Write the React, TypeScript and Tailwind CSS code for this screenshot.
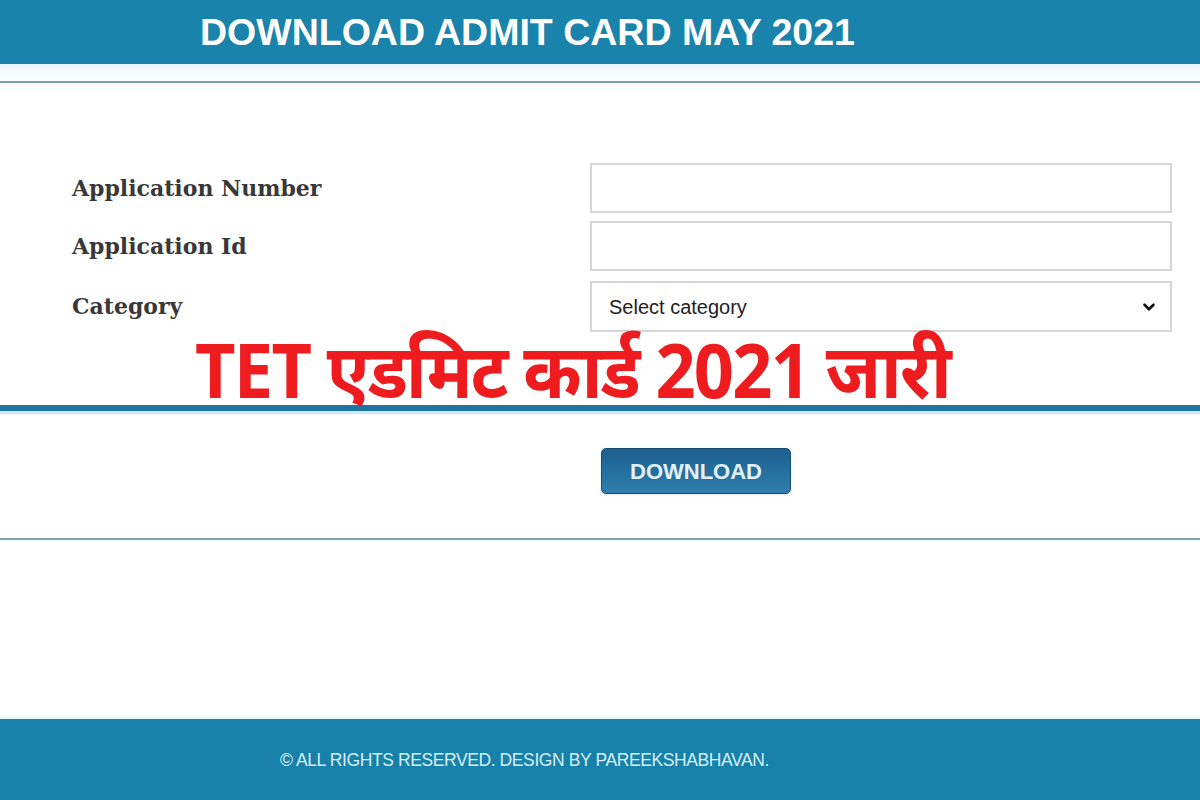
import { ChevronDown } from "lucide-react";

const labels = ["Application Number", "Application Id", "Category"];

export default function App() {
  return (
    <div className="w-[1200px] h-[800px] bg-white flex flex-col overflow-hidden">
      {/* header */}
      <div className="h-[64px] bg-[#1a83ac] flex items-center pl-[200px] shrink-0">
        <h1 className="text-white font-bold text-[37.5px] leading-none font-['Liberation_Sans',Arial,sans-serif] pt-[2px]">
          DOWNLOAD ADMIT CARD MAY 2021
        </h1>
      </div>
      <div className="h-[17px] bg-gradient-to-b from-[#eaf7fb] to-white shrink-0" />
      <div className="h-[2px] bg-[#7f9fa8] shrink-0" />

      {/* form */}
      <div className="pt-[80px] flex shrink-0">
        <div className="w-[590px] pl-[72px] flex flex-col font-['DejaVu_Serif',Georgia,serif] font-bold text-[22px] text-[#383838]">
          <div className="h-[50px] flex items-center pt-[1px]">{labels[0]}</div>
          <div className="h-[50px] mt-[8px] flex items-center">{labels[1]}</div>
          <div className="h-[51px] mt-[10px] flex items-center">{labels[2]}</div>
        </div>
        <div className="w-[582px] flex flex-col">
          <div className="h-[50px] border-2 border-[#d6d6d6] bg-white" />
          <div className="h-[50px] mt-[8px] border-2 border-[#d6d6d6] bg-white" />
          <div className="h-[51px] mt-[10px] border-2 border-[#d6d6d6] bg-white flex items-center justify-between pl-[17px] pr-[12px] font-['Liberation_Sans',Arial,sans-serif] text-[20px] text-[#222]">
            <span>Select category</span>
            <ChevronDown size={18} strokeWidth={3.5} className="text-[#111]" />
          </div>
        </div>
      </div>

      {/* red headline */}
      <div className="h-[73px] flex items-center pl-[195px] shrink-0">
        <p className="origin-left scale-x-[0.925] text-[#ee1c1f] font-bold text-[76px] leading-none font-['Noto_Sans','Noto_Sans_Devanagari',sans-serif] tracking-tight whitespace-nowrap">
          TET एडमिट कार्ड 2021 जारी
        </p>
      </div>
      <div className="h-[6px] bg-[#1f75a0] shrink-0" />
      <div className="h-[3px] bg-[#c8ecf7] shrink-0" />

      {/* button */}
      <div className="pt-[34px] pl-[601px] shrink-0">
        <button className="w-[190px] h-[46px] rounded-[5px] bg-gradient-to-b from-[#1b5f8e] to-[#2e7fae] border border-[#1a4f74] text-[#e3f1f8] font-bold text-[22px] font-['Liberation_Sans',Arial,sans-serif] shadow-sm">
          DOWNLOAD
        </button>
      </div>
      <div className="h-[44px] shrink-0" />
      <div className="h-[2px] bg-[#7f9ea8] shrink-0" />
      <div className="h-[4px] bg-gradient-to-b from-[#eefbfd] to-white shrink-0" />

      <div className="flex-1" />
      <div className="h-[3px] bg-[#e8f8fb] shrink-0" />

      {/* footer */}
      <div className="h-[81px] bg-[#1781aa] flex items-center pl-[280px] shrink-0">
        <p className="text-[#d7eef6] text-[17.5px] font-['Liberation_Sans',Arial,sans-serif] tracking-[-0.4px] pt-[2px]">
          © ALL RIGHTS RESERVED. DESIGN BY PAREEKSHABHAVAN.
        </p>
      </div>
    </div>
  );
}
